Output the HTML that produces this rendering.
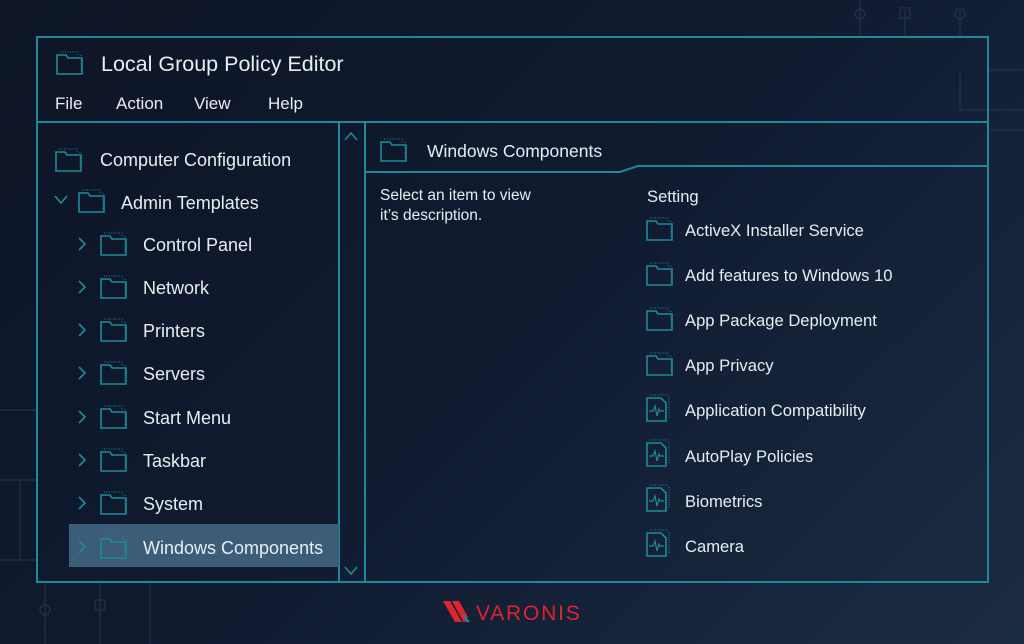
<!DOCTYPE html>
<html><head><meta charset="utf-8"><style>
*{margin:0;padding:0;box-sizing:border-box}
body{width:1024px;height:644px;overflow:hidden;background:linear-gradient(135deg,#0d1526 0%,#101b30 50%,#1a2c42 100%);font-family:"Liberation Sans",sans-serif;color:#e8edf2;position:relative}
.a{position:absolute}
.t{position:absolute;font-size:18px;white-space:nowrap}
.r{font-size:16.6px}
</style></head><body>
<svg class="a" style="left:0;top:0" width="1024" height="644">
<g stroke="#26384c" stroke-width="1.5" fill="none" opacity="0.7">
<path d="M860 0V36M905 10V36M960 10V36M988 70H1024M988 130H1024M960 70V110H1024"/>
<rect x="900" y="8" width="10" height="10"/><circle cx="960" cy="14" r="5"/><circle cx="860" cy="14" r="5"/>
<path d="M0 410H36M0 480H36M20 480V560M36 560H0M45 582V644M100 582V644M150 582V644"/>
<circle cx="45" cy="610" r="5"/><rect x="95" y="600" width="10" height="10"/>
</g>
<g fill="none" stroke="#1e8a99" stroke-width="2">
<rect x="37" y="37" width="951" height="545"/>
<path d="M37 122H988M339 122V582M365 122V582M365 172H620L638 166H988"/>
</g>
<rect x="69" y="524" width="270" height="43" fill="#3b5d78"/>
<defs>
<g id="f"><path d="M1 5V24H26V8H12L10 5Z" fill="none" stroke="#1e8a99" stroke-width="1.6"/><path d="M4 2H22V5M25 5V22" stroke="#1e8a99" stroke-width="1" stroke-dasharray="1 1.5" fill="none"/></g>
<g id="d"><path d="M1 1H15L20 6V24H1Z" fill="none" stroke="#1e8a99" stroke-width="1.6"/><path d="M3 14H7L9 9L11 19L13 12L14 14H18" fill="none" stroke="#1e8a99" stroke-width="1.2"/><path d="M4 -2H22M23 0V22" stroke="#1e8a99" stroke-width="1" stroke-dasharray="1 1.5" fill="none"/></g>
</defs>
<use href="#f" x="56" y="50"/>
<use href="#f" x="55" y="147"/>
<use href="#f" x="78" y="188"/>
<use href="#f" x="100" y="231"/><use href="#f" x="100" y="274"/><use href="#f" x="100" y="317"/><use href="#f" x="100" y="360"/><use href="#f" x="100" y="404"/><use href="#f" x="100" y="447"/><use href="#f" x="100" y="490"/><use href="#f" x="100" y="534"/>
<use href="#f" x="380" y="137"/>
<use href="#f" x="646" y="216"/><use href="#f" x="646" y="261"/><use href="#f" x="646" y="306"/><use href="#f" x="646" y="351"/>
<use href="#d" x="646" y="397"/><use href="#d" x="646" y="442"/><use href="#d" x="646" y="487"/><use href="#d" x="646" y="532"/>
<g fill="none" stroke="#1e8a99" stroke-width="1.6">
<path d="M345 140L351 133L357 140M345 567L351 574L357 567M55 196L61 203L67 196"/>
<path d="M79 238L85 244L79 250M79 281L85 287L79 293M79 324L85 330L79 336M79 367L85 373L79 379M79 411L85 417L79 423M79 454L85 460L79 466M79 497L85 503L79 509M79 541L85 547L79 553"/>
</g>
<path d="M443 601H450L462 622H455Z" fill="#e0242f"/><path d="M452 601H459L468 617L464 623Z" fill="#e0242f"/><path d="M462 612L470 622H466Z" fill="#1e8a99"/>
</svg>
<div class="t" style="left:101px;top:52px;font-size:21.5px">Local Group Policy Editor</div>
<div class="t" style="left:55px;top:94px;font-size:17px">File</div>
<div class="t" style="left:116px;top:94px;font-size:17px">Action</div>
<div class="t" style="left:194px;top:94px;font-size:17px">View</div>
<div class="t" style="left:268px;top:94px;font-size:17px">Help</div>
<div class="t" style="left:100px;top:150px">Computer Configuration</div>
<div class="t" style="left:121px;top:193px">Admin Templates</div>
<div class="t" style="left:143px;top:235px">Control Panel</div>
<div class="t" style="left:143px;top:278px">Network</div>
<div class="t" style="left:143px;top:321px">Printers</div>
<div class="t" style="left:143px;top:364px">Servers</div>
<div class="t" style="left:143px;top:408px">Start Menu</div>
<div class="t" style="left:143px;top:451px">Taskbar</div>
<div class="t" style="left:143px;top:494px">System</div>
<div class="t" style="left:143px;top:538px">Windows Components</div>
<div class="t" style="left:427px;top:141px;font-size:17.5px">Windows Components</div>
<div class="t" style="left:380px;top:186px;font-size:15.5px;line-height:20px">Select an item to view<br>it’s description.</div>
<div class="t r" style="left:647px;top:187px">Setting</div>
<div class="t r" style="left:685px;top:221px">ActiveX Installer Service</div>
<div class="t r" style="left:685px;top:266px">Add features to Windows 10</div>
<div class="t r" style="left:685px;top:311px">App Package Deployment</div>
<div class="t r" style="left:685px;top:356px">App Privacy</div>
<div class="t r" style="left:685px;top:401px">Application Compatibility</div>
<div class="t r" style="left:685px;top:447px">AutoPlay Policies</div>
<div class="t r" style="left:685px;top:492px">Biometrics</div>
<div class="t r" style="left:685px;top:537px">Camera</div>
<div class="t" style="left:476px;top:602px;font-size:21px;color:#e0242f;letter-spacing:1.8px">VARONIS</div>
</body></html>
